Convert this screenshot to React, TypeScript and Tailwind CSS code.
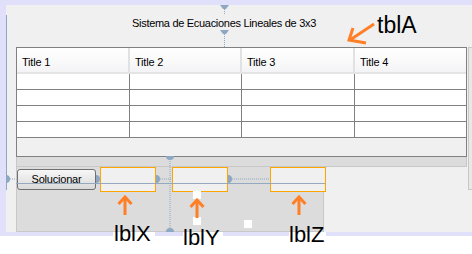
import React from "react";

const ORANGE = "#ff7f27";

function UpArrow({ x, y }: { x: number; y: number }) {
  return (
    <svg className="absolute" style={{ left: x - 8, top: y }} width="16" height="22" viewBox="0 0 16 22">
      <path d="M8 2 L8 20" stroke={ORANGE} strokeWidth="3" fill="none" />
      <path d="M1.5 9 L8 2 L14.5 9" stroke={ORANGE} strokeWidth="3" fill="none" strokeLinejoin="miter" />
    </svg>
  );
}

const cols = ["w-[113px]", "w-[112px]", "w-[113px]", "w-[111px]"];
const titles = ["Title 1", "Title 2", "Title 3", "Title 4"];

export default function App() {
  return (
    <div className="relative w-[472px] h-[254px] bg-white overflow-hidden font-['Liberation_Sans',Arial,sans-serif] text-black">
      <div className="h-[236px] bg-[#e0e0fa] pt-[5px] pl-[6px] pb-[4px]">
        <div className="h-[227px] bg-[#f0f0f0]">
          {/* Title */}
          <div className="h-[42px] pl-[126px] pt-[12px] text-[11px] leading-[13px] tracking-[-0.3px] whitespace-nowrap">
            Sistema de Ecuaciones Lineales de 3x3
          </div>
          <div className="flex ml-[10px]">
            <div className="w-[451px]">
              {/* Table */}
              <div className="h-[110px] border border-[#808080] bg-[#f0f0f0]">
                <div className="flex h-[26px] border-b-2 border-[#e4e4e4] bg-gradient-to-b from-white to-[#f4f4f6]">
                  {titles.map((t, i) => (
                    <div
                      key={t}
                      className={`${cols[i]} shrink-0 ${i < 3 ? "border-r-2 border-[#e2e2e2]" : ""} pl-[5px] pt-[8px] text-[11px] leading-[13px] tracking-[-0.2px]`}
                    >
                      {t}
                    </div>
                  ))}
                </div>
                {[0, 1, 2, 3].map((r) => (
                  <div key={r} className="flex h-[16px] border-b border-[#808080] bg-white">
                    {cols.map((c, i) => (
                      <div key={i} className={`${c} shrink-0 ${i < 3 ? "border-r border-[#808080]" : ""}`} />
                    ))}
                  </div>
                ))}
              </div>
              {/* band */}
              <div className="h-[10px] bg-[#dcdcdc] border border-t-0 border-[#c8c8c8]" />
              {/* lower block */}
              <div className="w-[308px] h-[65px] bg-[#dcdcdc] border border-t-0 border-[#c8c8c8]">
                <div className="flex items-start h-[25px]">
                  <div className="shrink-0 mt-[2px] w-[79px] h-[21px] rounded-[3px] border border-[#707070] bg-gradient-to-b from-[#f6f6f6] to-[#dadada] flex items-center justify-center text-[11px] leading-[13px] tracking-[-0.2px]">
                    Solucionar
                  </div>
                  <div className="shrink-0 ml-[4px] w-[56px] h-[25px] border border-[#ffa500] bg-[#f0f0f0]" />
                  <div className="shrink-0 ml-[16px] w-[56px] h-[25px] border border-[#ffa500] bg-[#f0f0f0]" />
                  <div className="shrink-0 ml-[42px] w-[56px] h-[25px] border border-[#ffa500] bg-[#f0f0f0]" />
                </div>
              </div>
            </div>
            <div className="ml-[1px] w-[4px] h-[143px] bg-[#e8e8e8] border border-r-0 border-[#c8c8c8]" />
          </div>
        </div>
      </div>

      {/* guides */}
      <div className="absolute left-[6px] top-[15px] w-[1px] h-[175px] bg-[#8ea7c2]" />
      <div className="absolute left-[16px] top-[183px] w-[309px] h-[1px] bg-[#94a9bf]" />
      <svg className="absolute left-[220px] top-[5px]" width="9" height="42" viewBox="0 0 9 42">
        <path d="M0 0 H9 L6 4 H3 Z" fill="#8ea7c2" />
        <line x1="4.5" y1="4" x2="4.5" y2="10" stroke="#8ea7c2" strokeDasharray="1 1" />
        <path d="M0 25 H9 L6 29 H3 Z" fill="#8ea7c2" />
        <line x1="4.5" y1="29" x2="4.5" y2="42" stroke="#8ea7c2" strokeDasharray="1 1" />
      </svg>
      <svg className="absolute left-[165px] top-[156px]" width="10" height="76" viewBox="0 0 10 76">
        <line x1="5" y1="3" x2="5" y2="73" stroke="#8ea7c2" strokeDasharray="1 1" />
        <path d="M1 0 H9 A4 4 0 0 1 1 0 Z" fill="#8ea7c2" />
        <path d="M1 76 H9 A4 4 0 0 0 1 76 Z" fill="#8ea7c2" />
      </svg>
      <svg className="absolute left-[0px] top-[174px]" width="280" height="10" viewBox="0 0 280 10">
        <path d="M6 1 A4 4 0 0 1 6 9 Z" fill="#8ea7c2" />
        <line x1="10" y1="5" x2="16" y2="5" stroke="#8ea7c2" strokeDasharray="1 1" />
        <path d="M96 1 A4 4 0 0 1 96 9 Z" fill="#8ea7c2" />
        <path d="M156 1 A4 4 0 0 1 156 9 Z" fill="#8ea7c2" />
        <line x1="160" y1="5" x2="172" y2="5" stroke="#8ea7c2" strokeDasharray="1 1" />
        <path d="M228 1 A4 4 0 0 1 228 9 Z" fill="#8ea7c2" />
        <line x1="232" y1="5" x2="270" y2="5" stroke="#8ea7c2" strokeDasharray="1 1" />
      </svg>

      {/* white squares */}
      <div className="absolute left-[193px] top-[191px] w-[8px] h-[8px] bg-white" />
      <div className="absolute left-[193px] top-[217px] w-[8px] h-[8px] bg-white" />
      <div className="absolute left-[244px] top-[220px] w-[8px] h-[8px] bg-white" />

      {/* annotations */}
      <UpArrow x={125} y={195} />
      <UpArrow x={197} y={198} />
      <UpArrow x={299} y={195} />
      <svg className="absolute left-[344px] top-[20px]" width="34" height="26" viewBox="0 0 34 26">
        <path d="M30 4 L6 20" stroke={ORANGE} strokeWidth="3" fill="none" />
        <path d="M9 8 L5 20 L22 23" stroke={ORANGE} strokeWidth="3" fill="none" />
      </svg>

      <div className="absolute left-[113px] top-[232px] w-[42px] h-[5px] bg-white" />
      <div className="absolute left-[183px] top-[232px] w-[40px] h-[5px] bg-white" />
      <div className="absolute left-[289px] top-[232px] w-[37px] h-[5px] bg-white" />

      <div className="absolute left-[114px] top-[221px] text-[22px] leading-[26px]">lblX</div>
      <div className="absolute left-[183px] top-[225px] text-[22px] leading-[26px]">lblY</div>
      <div className="absolute left-[289px] top-[222px] text-[22px] leading-[26px]">lblZ</div>
      <div className="absolute left-[377px] top-[12px] text-[23px] leading-[27px]">tblA</div>
    </div>
  );
}
